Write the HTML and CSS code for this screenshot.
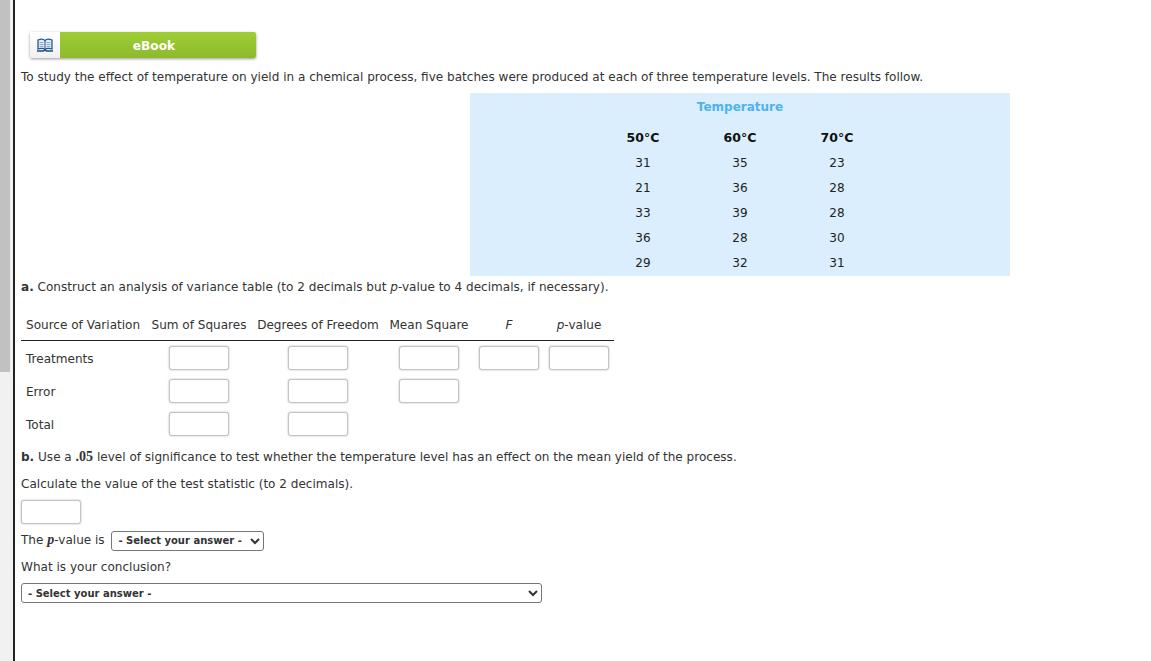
FILE: index.html
```html
<!DOCTYPE html>
<html>
<head>
<meta charset="utf-8">
<title>eBook</title>
<link rel="stylesheet" href="styles.css">
</head>
<body>
<div class="page">
  <div class="scrolltrack"><div class="scrollthumb"></div></div>
  <div class="content">
    <div class="ebook">
      <span class="ebookicon">
        <svg width="16" height="14" viewBox="0 0 16 14">
          <path d="M1 2c3-1.200 5.500-1 7 .5 1.500-1.500 4-1.700 7-.5v9c-3-1-5.500-.8-7 .5-1.500-1.300-4-1.500-7-.5z" fill="#e4edf5" stroke="#24598f" stroke-width="1.300"/>
          <path d="M8 2.500v9" stroke="#24598f" stroke-width="1"/>
          <path d="M2.500 4.500h4M2.500 6.500h4M2.500 8.500h4M9.500 4.500h4M9.500 6.500h4M9.500 8.500h4" stroke="#8aa8c6" stroke-width="1"/>
          <path d="M0 13h6.500l1.500-1 1.500 1H16" fill="none" stroke="#1c4a7c" stroke-width="1.400"/>
        </svg>
      </span>
      <span class="ebooklabel">eBook</span>
    </div>

    <p class="intro">To study the effect of temperature on yield in a chemical process, five batches were produced at each of three temperature levels. The results follow.</p>

    <div class="datapanel">
      <div class="datatitle">Temperature</div>
      <table class="datatable">
        <tr><th>50°C</th><th>60°C</th><th>70°C</th></tr>
        <tr><td>31</td><td>35</td><td>23</td></tr>
        <tr><td>21</td><td>36</td><td>28</td></tr>
        <tr><td>33</td><td>39</td><td>28</td></tr>
        <tr><td>36</td><td>28</td><td>30</td></tr>
        <tr><td>29</td><td>32</td><td>31</td></tr>
      </table>
    </div>

    <p class="parta"><b>a.</b> Construct an analysis of variance table (to 2 decimals but <i>p</i>-value to 4 decimals, if necessary).</p>

    <table class="anova">
      <colgroup>
        <col class="c1"><col class="c2"><col class="c3"><col class="c4"><col class="c5"><col class="c6">
      </colgroup>
      <tr class="anovahead">
        <th class="rowname">Source of Variation</th>
        <th>Sum of Squares</th>
        <th>Degrees of Freedom</th>
        <th>Mean Square</th>
        <th><i>F</i></th>
        <th><i>p</i>-value</th>
      </tr>
      <tr>
        <td class="rowname">Treatments</td>
        <td><input class="num" type="text"></td>
        <td><input class="num" type="text"></td>
        <td><input class="num" type="text"></td>
        <td><input class="num" type="text"></td>
        <td><input class="num" type="text"></td>
      </tr>
      <tr>
        <td class="rowname">Error</td>
        <td><input class="num" type="text"></td>
        <td><input class="num" type="text"></td>
        <td><input class="num" type="text"></td>
        <td></td>
        <td></td>
      </tr>
      <tr>
        <td class="rowname">Total</td>
        <td><input class="num" type="text"></td>
        <td><input class="num" type="text"></td>
        <td></td>
        <td></td>
        <td></td>
      </tr>
    </table>

    <p class="partb"><b>b.</b> Use a <b class="math">.05</b> level of significance to test whether the temperature level has an effect on the mean yield of the process.</p>
    <p class="calc">Calculate the value of the test statistic (to 2 decimals).</p>
    <input class="num statinput" type="text">
    <p class="pvalue">The <b class="math"><i>p</i></b>-value is <select class="answer short"><option>- Select your answer -</option></select></p>
    <p class="concl">What is your conclusion?</p>
    <select class="answer long"><option>- Select your answer -</option></select>
  </div>
</div>
</body>
</html>
```

FILE: styles.css
```css
html, body {
  margin: 0;
  padding: 0;
  background: #fff;
}

body {
  font-family: "DejaVu Sans", Verdana, sans-serif;
  font-size: 12.05px;
  color: #333;
}

.page {
  display: flex;
  height: 661px;
  overflow: hidden;
}

.scrolltrack {
  width: 13px;
  background: #f1f1f1;
  border-right: 2px solid #222;
  flex: none;
}

.scrollthumb {
  width: 10px;
  height: 372px;
  background: #c1c1c1;
}

.content {
  padding: 32px 0 0 6px;
  flex: 1;
}

p {
  margin: 0;
  line-height: 16px;
}

.ebook {
  display: flex;
  width: 226px;
  height: 26px;
  margin-left: 9px;
  border-radius: 2px;
  box-shadow: 0 1px 3px rgba(0, 0, 0, .4);
}

.ebookicon {
  width: 30px;
  background: linear-gradient(#fff, #f0f0f0);
  display: flex;
  align-items: center;
  justify-content: center;
}

.ebooklabel {
  flex: 1;
  background: linear-gradient(#a0ce36, #8cba2a);
  color: #fff;
  font-weight: bold;
  font-size: 12.2px;
  text-align: center;
  line-height: 28px;
  padding-right: 8px;
  border-radius: 0 2px 2px 0;
}

.intro {
  margin-top: 11px;
}

.datapanel {
  width: 540px;
  height: 183px;
  margin: 8px 0 0 449px;
  background: #dbeefd;
}

.datatitle {
  text-align: center;
  color: #4db3ee;
  font-weight: bold;
  font-size: 12px;
  line-height: 28px;
}

.datatable {
  width: 291px;
  margin: 4px auto 0;
  border-collapse: collapse;
  table-layout: fixed;
}

.datatable th, .datatable td {
  height: 25px;
  padding: 0;
  text-align: center;
  color: #222;
}

.datatable th {
  font-size: 12.5px;
  color: #111;
}

.parta {
  margin-top: 3px;
}

.anova {
  width: 593px;
  margin-top: 15px;
  border-collapse: collapse;
  table-layout: fixed;
}

.c1 { width: 125px; }
.c2 { width: 106px; }
.c3 { width: 132px; }
.c4 { width: 90px; }
.c5 { width: 70px; }
.c6 { width: 70px; }

.anova th, .anova td {
  height: 33px;
  padding: 0;
  text-align: center;
  font-weight: normal;
}

.anova th {
  height: 30px;
  white-space: nowrap;
  border-bottom: 1px solid #222;
}

.anova .rowname {
  text-align: left;
  padding-left: 5px;
}

.anova td.rowname {
  height: 31px;
  padding-top: 2px;
}

.num {
  display: block;
  box-sizing: border-box;
  width: 60px;
  height: 24px;
  margin: 0 auto;
  padding: 0;
  background: #fff;
  border: 1px solid #c4c4c4;
  border-radius: 3px;
  box-shadow: 0 0 2px rgba(0, 0, 0, .3);
}

.partb {
  margin-top: 9px;
}

.calc {
  margin-top: 11px;
}

.math {
  font-family: "Liberation Serif", "DejaVu Serif", serif;
  font-size: 14px;
}

.statinput {
  margin: 8px 0 0 0;
}

.pvalue {
  margin-top: 5px;
  height: 22px;
  line-height: 22px;
}

.concl {
  margin-top: 8px;
}

.answer {
  box-sizing: border-box;
  height: 20px;
  padding: 0 0 0 2px;
  background: #fff;
  border: 1px solid #767676;
  border-radius: 3px;
  color: #333;
  font-family: "DejaVu Sans", Verdana, sans-serif;
  font-size: 10px;
  font-weight: bold;
  vertical-align: middle;
}

.short {
  width: 153px;
  margin-left: 3px;
}

.long {
  display: block;
  width: 521px;
  margin-top: 8px;
}
```
